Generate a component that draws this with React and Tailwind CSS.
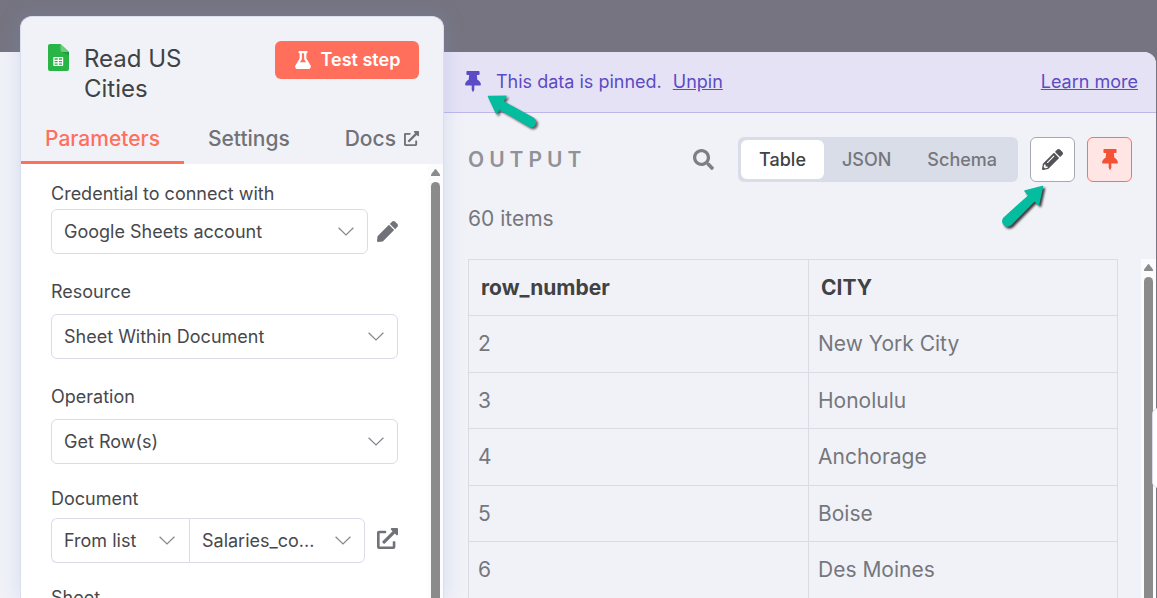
import { FaExternalLinkAlt, FaFlask, FaPen, FaPencilAlt, FaSearch, FaThumbtack } from "react-icons/fa";

const rows = [
  [2, "New York City"],
  [3, "Honolulu"],
  [4, "Anchorage"],
  [5, "Boise"],
  [6, "Des Moines"],
];

function SheetsIcon() {
  return (
    <svg viewBox="0 0 21 27" className="mt-[27px] h-[27px] w-[21px] shrink-0" aria-hidden="true">
      <path d="M2 0h10.500L21 8v17a2 2 0 0 1-2 2H2a2 2 0 0 1-2-2V2a2 2 0 0 1 2-2Z" fill="#28b446" />
      <path d="M14 8h7v3.500Z" fill="#219b3b" />
      <path d="M12.500 0 21 8h-6.500a2 2 0 0 1-2-2Z" fill="#6ace7c" />
      <path d="M6 13h8.500a.7.7 0 0 1 .7.7v7.600a.7.700 0 0 1-.7.700H6a.7.700 0 0 1-.7-.7v-7.600A.7.700 0 0 1 6 13Z" fill="#fff" />
      <path d="M6.500 14.300h3.200v1.400H6.500zm4.400 0h3.100v1.400h-3.100zM6.500 16.900h3.200v1.400H6.500zm4.400 0h3.100v1.400h-3.100zM6.500 19.500h3.200v1.300H6.500zm4.400 0h3.100v1.300h-3.100z" fill="#28b446" />
    </svg>
  );
}

function Chevron() {
  return (
    <svg viewBox="0 0 16 9" className="pointer-events-none absolute top-[18px] right-[14px] h-[9px] w-4" fill="none" stroke="#85878d" strokeWidth="1.200" aria-hidden="true">
      <path d="M.6.700 8 8 15.400.700" />
    </svg>
  );
}

function Select({ id, value, label, wrap = "flex-1", shape = "rounded-md border" }) {
  return (
    <div className={`relative min-w-0 ${wrap}`}>
      <select
        id={id}
        aria-label={label}
        defaultValue={value}
        className={`block h-[45px] w-full appearance-none border-[#d9dce8] bg-white pr-9 pl-3 text-[18px] text-[#47484b] ${shape}`}
      >
        <option>{value}</option>
      </select>
      <Chevron />
    </div>
  );
}

function Label({ htmlFor, children }) {
  return (
    <label htmlFor={htmlFor} className="block text-[18px] leading-6 text-[#47484b]">
      {children}
    </label>
  );
}

function Scrollbar({ className }) {
  return (
    <div className={`flex shrink-0 flex-col items-center bg-[#fcfcfc] pt-[5px] ${className}`} aria-hidden="true">
      <svg viewBox="0 0 9 7" className="mb-[6px] h-[7px] w-[9px] shrink-0" fill="#8b8b8b">
        <path d="M3.800.500q.7-.8 1.400 0L9 5.600V7H0V5.600Z" />
      </svg>
      <div className="w-[9px] flex-1 rounded-t-full bg-[#8b8b8b]" />
    </div>
  );
}

function NodePanel() {
  return (
    <section className="z-10 mt-4 flex w-[424px] shrink-0 flex-col overflow-hidden rounded-t-xl border border-b-0 border-[#d9dfee] bg-[#f1f2f8] shadow-[0_0_20px_rgba(120,150,210,0.25)]">
      <header className="flex items-start pr-6 pl-[27px]">
        <SheetsIcon />
        <h1 className="mt-[27px] ml-[15px] flex-1 pr-10 text-[24px] leading-[30px] text-[#414244]">Read US Cities</h1>
        <button className="mt-6 flex h-[38px] w-36 shrink-0 items-center justify-center gap-[9px] rounded-md bg-[#ff6f5c] pb-px text-[18px] font-semibold text-white">
          <FaFlask className="h-[18px] w-[18px]" />
          Test step
        </button>
      </header>
      <nav className="mt-[10px] flex h-[50px] shrink-0 text-[21px] leading-[50px] font-medium text-[#707277]">
        <button className="border-b-3 border-[#ff6f5c] px-6 text-[#ff6f5c]">Parameters</button>
        <button className="border-b-3 border-transparent px-6">Settings</button>
        <a href="#docs" className="ml-auto flex h-[49px] items-center gap-2 pr-6">
          Docs
          <FaExternalLinkAlt className="h-[15px] w-[15px]" />
        </a>
      </nav>
      <div className="flex min-h-0 flex-1 bg-white">
        <form className="min-w-0 flex-1 overflow-hidden pt-[18px] pr-[30px] pl-[30px]">
          <Label htmlFor="credential">Credential to connect with</Label>
          <div className="mt-[3px] flex items-center gap-[9px]">
            <Select id="credential" value="Google Sheets account" />
            <button type="button" aria-label="Edit credential" className="text-[#707277]">
              <FaPen className="h-[21px] w-[21px]" />
            </button>
          </div>
          <div className="mt-[26px] flex flex-col gap-[10px]">
            <Label htmlFor="resource">Resource</Label>
            <Select id="resource" value="Sheet Within Document" />
          </div>
          <div className="mt-[26px] flex flex-col gap-[10px]">
            <Label htmlFor="operation">Operation</Label>
            <Select id="operation" value="Get Row(s)" />
          </div>
          <div className="mt-[23px]">
            <Label htmlFor="document">Document</Label>
            <div className="mt-[7px] flex items-center gap-3">
              <div className="flex min-w-0 flex-1">
                <Select id="document-mode" label="Document mode" value="From list" wrap="w-[138px]" shape="rounded-l-md border border-r-0" />
                <Select id="document" value="Salaries_co..." shape="rounded-r-md border" />
              </div>
              <a href="#document" aria-label="Open document" className="pb-1 text-[#707277]">
                <FaExternalLinkAlt className="h-[21px] w-[21px]" />
              </a>
            </div>
          </div>
          <div className="mt-[23px]">
            <Label htmlFor="sheet">Sheet</Label>
            <Select id="sheet" value="Sheet1" />
          </div>
        </form>
        <Scrollbar className="w-[15px]" />
      </div>
    </section>
  );
}

function PinnedArrow() {
  return (
    <svg viewBox="0 0 60 44" className="pointer-events-none absolute top-4 left-[15px] h-11 w-[60px] drop-shadow-[2px_2px_1px_rgba(0,0,0,0.6)]" aria-hidden="true">
      <path d="M8.500 9.500 26 9.200 22.500 14.500 53.500 31.500A4.500 4.500 0 0 1 50 39.500L19 21.500 16.500 26.500Z" fill="#04bd9f" stroke="#04bd9f" strokeWidth="1.500" strokeLinejoin="round" />
    </svg>
  );
}

function EditArrow() {
  return (
    <svg viewBox="0 0 52 52" className="pointer-events-none absolute top-[42px] right-[25px] h-[52px] w-[52px] drop-shadow-[2px_2px_1px_rgba(0,0,0,0.75)]" aria-hidden="true">
      <path d="M44.500 7.500 27 12 31 16.500 6 39A4.800 4.800 0 0 0 12.500 46L36.500 21.500 40.500 25.500Z" fill="#04bd9f" stroke="#04bd9f" strokeWidth="1.500" strokeLinejoin="round" />
    </svg>
  );
}

function OutputPanel() {
  return (
    <section className="mt-[52px] mr-px flex min-w-0 flex-1 flex-col overflow-hidden rounded-tr-xl bg-[#f1f2f8]">
      <div className="flex h-[61px] shrink-0 items-center border-b border-[#bfb6ea] bg-[#e6e2f6] pr-[18px] pb-[2px] pl-[21px] text-[18px] text-[#5b4bc4]">
        <div className="relative mr-[15px]">
          <FaThumbtack className="h-[21px] w-4" />
          <PinnedArrow />
        </div>
        <p>This data is pinned.</p>
        <a href="#unpin" className="ml-[11px] underline">Unpin</a>
        <a href="#learn" className="ml-auto underline">Learn more</a>
      </div>
      <div className="mt-6 flex h-[45px] shrink-0 items-center pr-6 pl-6">
        <h2 className="text-[21px] font-semibold tracking-[5px] text-[#909298]">OUTPUT</h2>
        <button aria-label="Search" className="mr-6 ml-auto text-[#7d7f85]">
          <FaSearch className="h-[21px] w-[21px]" />
        </button>
        <div className="mr-3 flex h-[45px] rounded-md bg-[#d9dde8] p-[3px] text-[18px] font-medium text-[#75777d]">
          <button className="rounded-md bg-white px-[18px] text-[#414244]">Table</button>
          <button className="px-[18px]">JSON</button>
          <button className="px-[18px]">Schema</button>
        </div>
        <div className="relative mr-3">
          <button aria-label="Edit output" className="flex h-[45px] w-[45px] items-center justify-center rounded-md border border-[#a5a9b5] bg-white text-[#525356]">
            <FaPencilAlt className="h-[21px] w-[21px]" />
          </button>
          <EditArrow />
        </div>
        <button aria-label="Unpin data" className="flex h-[45px] w-[45px] items-center justify-center rounded-md border border-[#ff6f5c] bg-[#ffe6e4] text-[#f45135]">
          <FaThumbtack className="h-[21px] w-4" />
        </button>
      </div>
      <p className="mt-[22px] pl-6 text-[21px] leading-[30px] text-[#75777d]">60 items</p>
      <div className="mt-[25px] flex min-h-0 flex-1">
        <div className="min-w-0 flex-1 overflow-hidden pr-[23px] pl-6">
          <table className="w-full table-fixed border-collapse text-left text-[21px] text-[#75777d]">
            <thead>
              <tr className="h-14 text-[#414244]">
                <th className="w-[340px] border border-[#d9dce5] pl-3 font-bold">row_number</th>
                <th className="border border-[#d9dce5] pl-3 font-bold">CITY</th>
              </tr>
            </thead>
            <tbody>
              {rows.map(([number, city]) => (
                <tr key={number} className="odd:h-[57px] even:h-14">
                  <td className="border border-[#d9dce5] pl-[9px]">{number}</td>
                  <td className="border border-[#d9dce5] pl-[9px]">{city}</td>
                </tr>
              ))}
            </tbody>
          </table>
        </div>
        <Scrollbar className="w-[15px]" />
      </div>
    </section>
  );
}

export default function App() {
  return (
    <main className="relative flex h-screen overflow-hidden bg-[#767480] font-['Inter',sans-serif]">
      <div className="mt-[52px] w-5 shrink-0 bg-[#f1f2f8]" />
      <NodePanel />
      <OutputPanel />
      <div className="absolute top-[408px] -right-2 h-20 w-[13px] rounded-md border border-[#d9dce8] bg-white" />
    </main>
  );
}
